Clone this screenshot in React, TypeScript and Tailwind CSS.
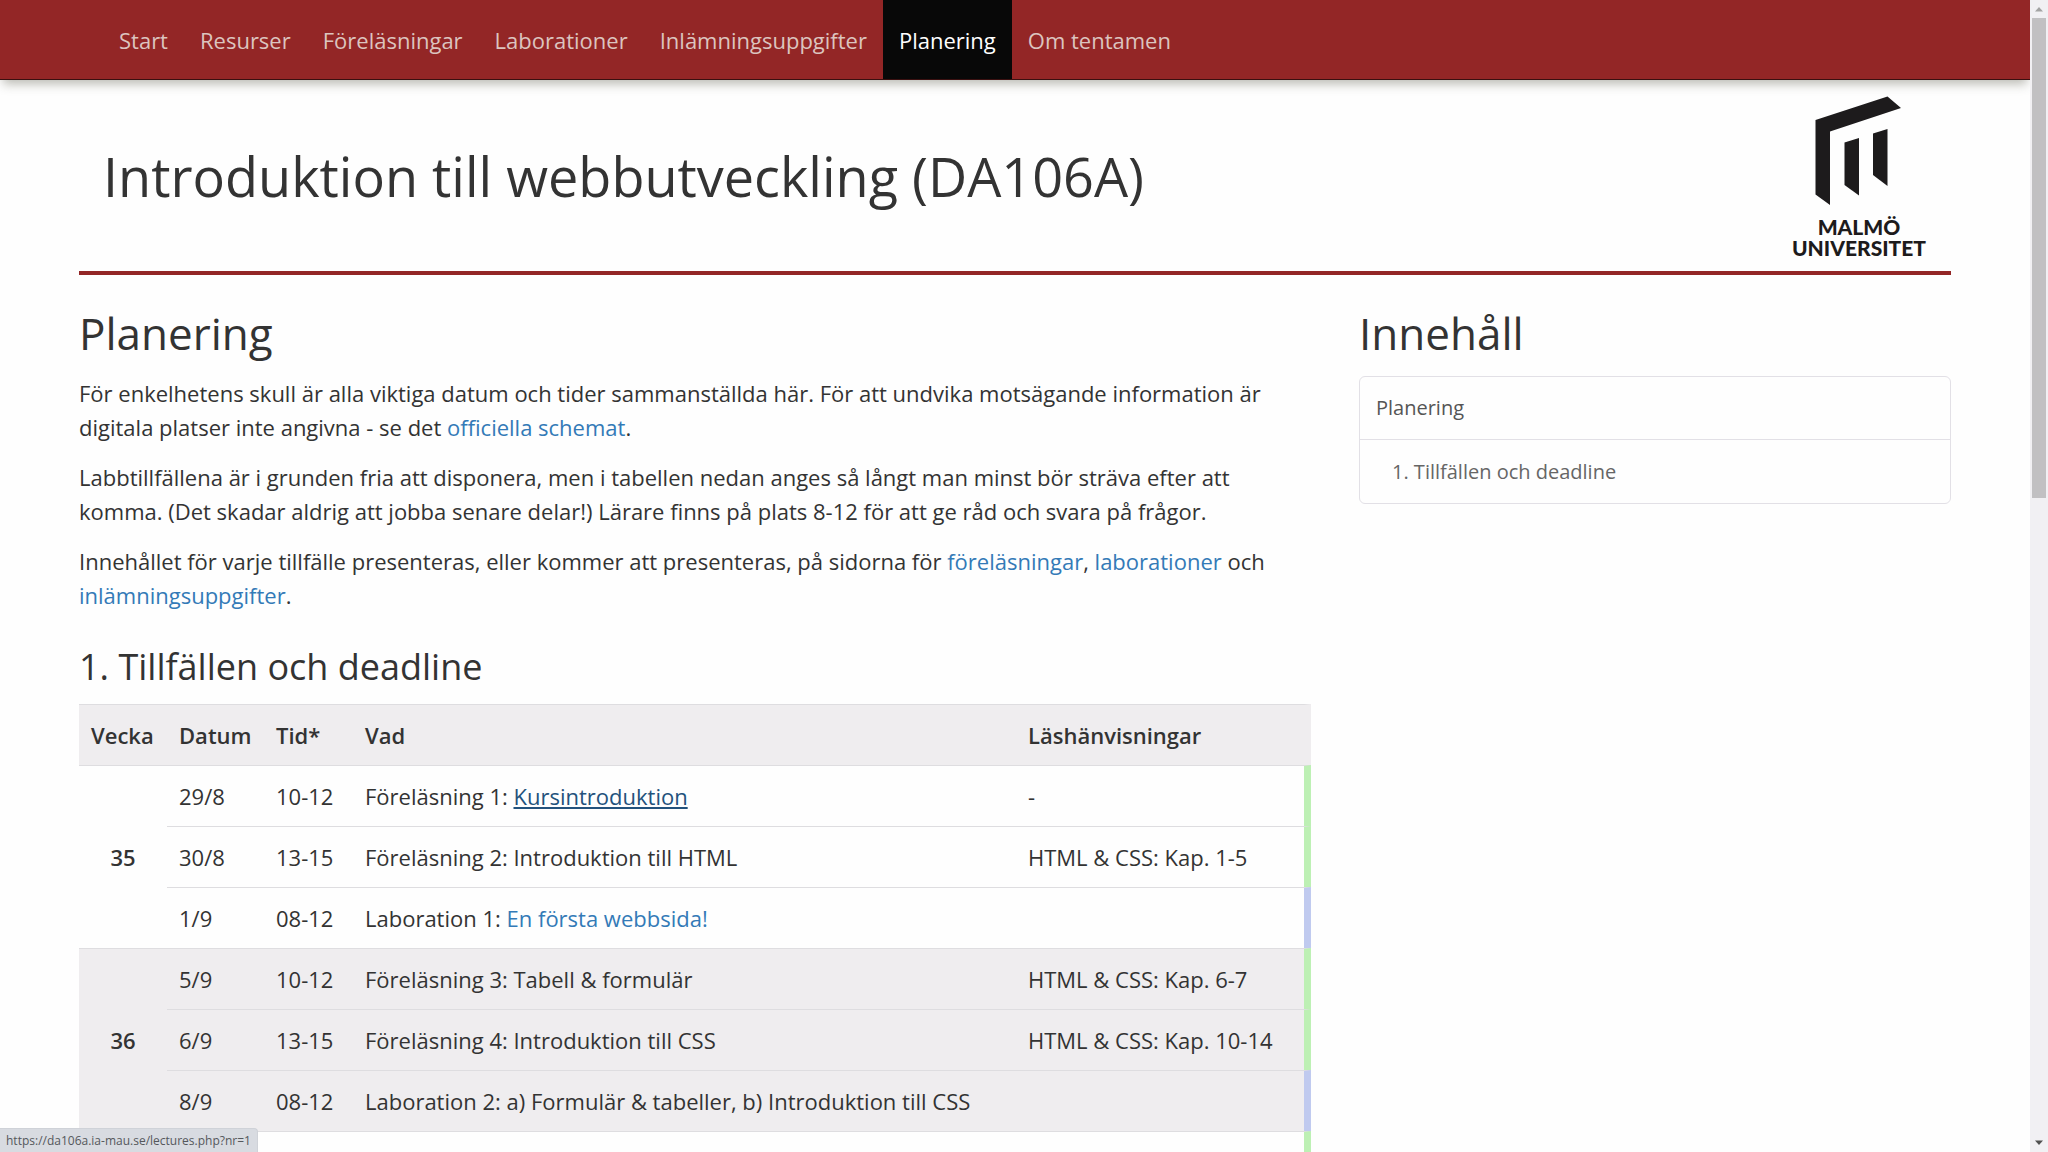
import type { ReactNode } from "react";

type Kind = "lecture" | "lab";
type Session = {
  date: string;
  time: string;
  what: ReactNode;
  reading: string;
  kind: Kind;
};
type Week = { week: string; sessions: Session[] };

const navItems = [
  "Start",
  "Resurser",
  "Föreläsningar",
  "Laborationer",
  "Inlämningsuppgifter",
  "Planering",
  "Om tentamen",
];

const link = "text-[#337ab7] hover:text-[#23527c] hover:underline";

const kindBorder: Record<Kind, string> = {
  lecture: "border-r-[#bdf0b4]",
  lab: "border-r-[#c0caef]",
};

const weeks: Week[] = [
  {
    week: "35",
    sessions: [
      {
        date: "29/8",
        time: "10-12",
        what: (
          <>
            Föreläsning 1:{" "}
            <a href="#kursintroduktion" className="text-[#23527c] underline">
              Kursintroduktion
            </a>
          </>
        ),
        reading: "-",
        kind: "lecture",
      },
      {
        date: "30/8",
        time: "13-15",
        what: "Föreläsning 2: Introduktion till HTML",
        reading: "HTML & CSS: Kap. 1-5",
        kind: "lecture",
      },
      {
        date: "1/9",
        time: "08-12",
        what: (
          <>
            Laboration 1:{" "}
            <a href="#laboration-1" className={link}>
              En första webbsida!
            </a>
          </>
        ),
        reading: "",
        kind: "lab",
      },
    ],
  },
  {
    week: "36",
    sessions: [
      {
        date: "5/9",
        time: "10-12",
        what: "Föreläsning 3: Tabell & formulär",
        reading: "HTML & CSS: Kap. 6-7",
        kind: "lecture",
      },
      {
        date: "6/9",
        time: "13-15",
        what: "Föreläsning 4: Introduktion till CSS",
        reading: "HTML & CSS: Kap. 10-14",
        kind: "lecture",
      },
      {
        date: "8/9",
        time: "08-12",
        what: "Laboration 2: a) Formulär & tabeller, b) Introduktion till CSS",
        reading: "",
        kind: "lab",
      },
    ],
  },
  {
    week: "",
    sessions: [{ date: "", time: "", what: "", reading: "", kind: "lecture" }],
  },
];

const cell = "h-[61px] border-t border-t-[#dedde0] px-3";

function Navbar() {
  return (
    <nav className="relative border-b border-[#3a1010] bg-[#932626] shadow-[0_7px_10px_-3px_rgba(60,60,40,0.35)]">
      <ul className="flex px-[103px]">
        {navItems.map((item) => (
          <li key={item}>
            <a
              href={`#${item}`}
              className={`flex h-[79px] items-center px-4 ${
                item === "Planering" ? "bg-[#080808] text-white" : "text-[#dcc4bf] hover:text-white"
              }`}
            >
              {item}
            </a>
          </li>
        ))}
      </ul>
    </nav>
  );
}

function Logo() {
  return (
    <svg width="180" height="190" viewBox="0 0 180 190" fill="#1d1b1c" role="img" aria-label="Malmö universitet">
      <path d="M45.5 39 117.5 15.5 131 27 60 50.5V124L45.5 113.5Z" />
      <path d="M74.5 61.5 89 57V114.5L74.5 104Z" />
      <path d="M103 52.5 117.5 48V105L103 94Z" />
      <g fontFamily="Lato, sans-serif" fontWeight="900" fontSize="21" textAnchor="middle">
        <text x="89" y="154">
          MALMÖ
        </text>
        <text x="89" y="175">
          UNIVERSITET
        </text>
      </g>
    </svg>
  );
}

function Schedule() {
  return (
    <table className="w-full table-fixed border-separate border-spacing-0 text-left">
      <colgroup>
        <col className="w-[88px]" />
        <col className="w-[97px]" />
        <col className="w-[89px]" />
        <col />
        <col className="w-[295px]" />
      </colgroup>
      <thead className="bg-[#efedef]">
        <tr>
          <th className={`${cell} font-semibold`}>Vecka</th>
          <th className={`${cell} font-semibold`}>Datum</th>
          <th className={`${cell} font-semibold`}>Tid*</th>
          <th className={`${cell} font-semibold`}>Vad</th>
          <th className={`${cell} border-r-[7px] border-r-[#efedef] font-semibold`}>Läshänvisningar</th>
        </tr>
      </thead>
      {weeks.map((w, wi) => (
        <tbody key={wi} className={wi % 2 === 1 ? "bg-[#efedef]" : "bg-[#fefefe]"}>
          {w.sessions.map((s, i) => (
            <tr key={i}>
              {i === 0 && (
                <th rowSpan={w.sessions.length} className={`${cell} text-center font-semibold`}>
                  {w.week}
                </th>
              )}
              <td className={cell}>{s.date}</td>
              <td className={cell}>{s.time}</td>
              <td className={cell}>{s.what}</td>
              <td className={`${cell} border-r-[7px] ${kindBorder[s.kind]}`}>{s.reading}</td>
            </tr>
          ))}
        </tbody>
      ))}
    </table>
  );
}

function Scrollbar() {
  return (
    <div className="flex w-[18px] shrink-0 flex-col items-center bg-[#f1f0f3]">
      <svg width="18" height="18" viewBox="0 0 18 18" fill="#a3a3a3">
        <path d="M5 11.5 9 7l4 4.5Z" />
      </svg>
      <div className="w-[14px] grow">
        <div className="h-[43%] bg-[#c1c0c2]" />
      </div>
      <svg width="18" height="18" viewBox="0 0 18 18" fill="#505050">
        <path d="M5 6.5 9 11l4-4.5Z" />
      </svg>
    </div>
  );
}

export default function App() {
  return (
    <div className="flex h-screen overflow-hidden bg-[#fefefe] font-['Open_Sans',sans-serif] text-[22px] leading-[34px] text-[#333]">
      <div className="min-w-0 grow overflow-hidden">
        <Navbar />
        <div className="mx-[55px]">
          <header className="mx-6 flex items-center justify-between border-b-4 border-[#932626] pt-px pr-px pl-6">
            <h1 className="text-[54px] leading-[64px]">Introduktion till webbutveckling (DA106A)</h1>
            <Logo />
          </header>

          <div className="flex pt-8">
            <main className="w-2/3 px-6">
              <h2 className="mb-[17px] text-[44px] leading-[52px]">Planering</h2>
              <p className="mb-4">
                För enkelhetens skull är alla viktiga datum och tider sammanställda här. För att undvika motsägande
                information är digitala platser inte angivna - se det{" "}
                <a href="#schema" className={link}>
                  officiella schemat
                </a>
                .
              </p>
              <p className="mb-4">
                Labbtillfällena är i grunden fria att disponera, men i tabellen nedan anges så långt man minst bör
                sträva efter att komma. (Det skadar aldrig att jobba senare delar!) Lärare finns på plats 8-12 för att
                ge råd och svara på frågor.
              </p>
              <p className="mb-4">
                Innehållet för varje tillfälle presenteras, eller kommer att presenteras, på sidorna för{" "}
                <a href="#forelasningar" className={link}>
                  föreläsningar
                </a>
                ,{" "}
                <a href="#laborationer" className={link}>
                  laborationer
                </a>{" "}
                och{" "}
                <a href="#inlamningsuppgifter" className={link}>
                  inlämningsuppgifter
                </a>
                .
              </p>
              <h3 id="tillfallen" className="mt-[34px] mb-4 text-[36px] leading-[42px]">
                1. Tillfällen och deadline
              </h3>
              <Schedule />
            </main>

            <aside className="w-1/3 px-6">
              <h2 className="mb-[17px] text-[44px] leading-[52px]">Innehåll</h2>
              <div className="divide-y divide-[#e2e0e6] rounded-md border border-[#e2e0e6] text-[20px] text-[#555]">
                <a href="#planering" className="flex h-[63px] items-center px-4">
                  Planering
                </a>
                <a href="#tillfallen" className="flex h-[63px] items-center px-8 text-[#666]">
                  1. Tillfällen och deadline
                </a>
              </div>
            </aside>
          </div>
        </div>
      </div>

      <Scrollbar />

      {/* link target shown while hovering */}
      <div className="fixed bottom-0 left-0 rounded-tr border-t border-r border-[#cfd2d8] bg-[#d8dbe1] px-[6px] text-[12px] leading-[23px] text-[#55585c]">
        https://da106a.ia-mau.se/lectures.php?nr=1
      </div>
    </div>
  );
}
